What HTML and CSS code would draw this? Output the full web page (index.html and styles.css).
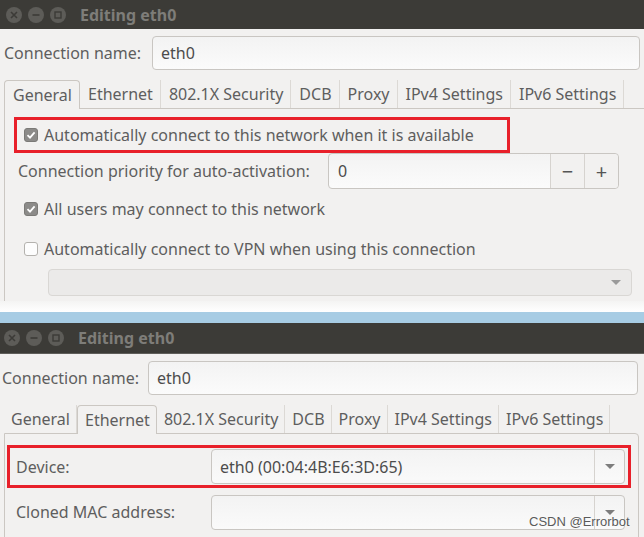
FILE: index.html
```html
<!DOCTYPE html>
<html lang="en">
<head>
  <meta charset="UTF-8">
  <title>Editing eth0</title>
  <link rel="stylesheet" href="styles.css">
</head>
<body>
  <div class="shot shot-top">
    <div class="titlebar">
      <div class="wbtns">
        <span class="wbtn"><svg width="8" height="8" viewBox="0 0 8 8"><path d="M1 1L7 7M7 1L1 7" stroke="#3c3b37" stroke-width="1.6"/></svg></span>
        <span class="wbtn"><svg width="8" height="8" viewBox="0 0 8 8"><path d="M0.5 4H7.5" stroke="#3c3b37" stroke-width="1.6"/></svg></span>
        <span class="wbtn"><svg width="8" height="8" viewBox="0 0 8 8"><rect x="1" y="1" width="6" height="6" fill="none" stroke="#3c3b37" stroke-width="1.4"/></svg></span>
      </div>
      <span class="title">Editing eth0</span>
    </div>
    <div class="body">
      <div class="name-row">
        <label>Connection name:</label>
        <div class="entry">eth0</div>
      </div>
      <div class="tabs">
        <span class="tab active">General</span>
        <span class="tab">Ethernet</span>
        <span class="tab">802.1X Security</span>
        <span class="tab">DCB</span>
        <span class="tab">Proxy</span>
        <span class="tab">IPv4 Settings</span>
        <span class="tab">IPv6 Settings</span>
      </div>
      <div class="panel">
        <div class="chk mark">
          <span class="check on"><svg width="10" height="10" viewBox="0 0 10 10"><path d="M1.5 5.2L4 7.6L8.6 2.4" fill="none" stroke="#fff" stroke-width="1.8"/></svg></span>
          Automatically connect to this network when it is available
        </div>
        <div class="prio">
          <span class="prio-label">Connection priority for auto-activation:</span>
          <div class="spin">
            <span class="spin-val">0</span>
            <span class="sbtn">&minus;</span>
            <span class="sbtn">+</span>
          </div>
        </div>
        <div class="chk users">
          <span class="check on"><svg width="10" height="10" viewBox="0 0 10 10"><path d="M1.5 5.2L4 7.6L8.6 2.4" fill="none" stroke="#fff" stroke-width="1.8"/></svg></span>
          All users may connect to this network
        </div>
        <div class="chk vpn">
          <span class="check"></span>
          Automatically connect to VPN when using this connection
        </div>
        <div class="combo disabled vpn-combo">
          <span class="combo-val"></span>
          <span class="drop"><span class="arrow"></span></span>
        </div>
      </div>
    </div>
  </div>

  <div class="sep-white"></div>
  <div class="sep-blue"></div>

  <div class="shot shot-bottom">
    <div class="titlebar">
      <div class="wbtns">
        <span class="wbtn"><svg width="8" height="8" viewBox="0 0 8 8"><path d="M1 1L7 7M7 1L1 7" stroke="#3c3b37" stroke-width="1.6"/></svg></span>
        <span class="wbtn"><svg width="8" height="8" viewBox="0 0 8 8"><path d="M0.5 4H7.5" stroke="#3c3b37" stroke-width="1.6"/></svg></span>
        <span class="wbtn"><svg width="8" height="8" viewBox="0 0 8 8"><rect x="1" y="1" width="6" height="6" fill="none" stroke="#3c3b37" stroke-width="1.4"/></svg></span>
      </div>
      <span class="title">Editing eth0</span>
    </div>
    <div class="body">
      <div class="name-row">
        <label>Connection name:</label>
        <div class="entry">eth0</div>
      </div>
      <div class="tabs">
        <span class="tab">General</span>
        <span class="tab active">Ethernet</span>
        <span class="tab">802.1X Security</span>
        <span class="tab">DCB</span>
        <span class="tab">Proxy</span>
        <span class="tab">IPv4 Settings</span>
        <span class="tab">IPv6 Settings</span>
      </div>
      <div class="panel">
        <div class="drow mark">
          <span class="drow-label">Device:</span>
          <div class="combo">
            <span class="combo-val">eth0 (00:04:4B:E6:3D:65)</span>
            <span class="drop"><span class="arrow"></span></span>
          </div>
        </div>
        <div class="drow cloned">
          <span class="drow-label">Cloned MAC address:</span>
          <div class="combo">
            <span class="combo-val"></span>
            <span class="drop"><span class="arrow"></span></span>
          </div>
        </div>
      </div>
    </div>
    <div class="watermark">CSDN @Errorbot</div>
  </div>
</body>
</html>
```

FILE: styles.css
```css
* {
  margin: 0;
  padding: 0;
  box-sizing: border-box;
}
body {
  width: 644px;
  height: 537px;
  overflow: hidden;
  background: #f2f1f0;
  font-family: 'Noto Sans', sans-serif;
  font-size: 16px;
  color: #5e5e5e;
}
.shot {
  overflow: hidden;
}
.shot-top {
  height: 301px;
}
.shot-bottom {
  height: 214px;
  position: relative;
}

/* title bar */
.titlebar {
  background: #3c3b37;
  display: flex;
  align-items: center;
}
.shot-top .titlebar {
  height: 29px;
  padding-left: 6px;
}
.shot-bottom .titlebar {
  height: 31px;
  padding-left: 4px;
  border-bottom: 1px solid #5f5e5a;
}
.wbtns {
  display: flex;
  gap: 6px;
}
.wbtn {
  width: 16px;
  height: 16px;
  border-radius: 50%;
  background: #5d5c58;
  display: flex;
  align-items: center;
  justify-content: center;
}
.title {
  margin-left: 14px;
  font-weight: bold;
  font-size: 16px;
  color: #7e7d79;
}

/* separator between the two screenshots */
.sep-white {
  height: 11px;
  background: linear-gradient(to bottom, #f4f4f3, #ffffff);
}
.sep-blue {
  height: 11px;
  background: #a7cce4;
}

/* window body */
.shot-top .body {
  padding: 0 4px;
}
.shot-bottom .body {
  padding: 0 6px 0 2px;
}
.name-row {
  display: flex;
  align-items: center;
  height: 34px;
  margin-top: 7px;
}
.shot-top .name-row label {
  flex: 0 0 148px;
}
.shot-bottom .name-row label {
  flex: 0 0 146px;
}
.entry {
  flex: 1;
  height: 34px;
  border: 1px solid #c9c6c2;
  border-radius: 4px;
  background: linear-gradient(#f3f3f3, #fbfbfb);
  padding-left: 8px;
  display: flex;
  align-items: center;
  color: #4c4c4c;
}

/* tabs */
.tabs {
  display: flex;
  height: 28px;
  margin-top: 10px;
}
.shot-bottom .tabs {
  margin-left: 2px;
}
.tab {
  padding: 0 7px 0 8px;
  display: flex;
  align-items: center;
  border-right: 1px solid #dcd9d5;
  white-space: nowrap;
}
.shot-bottom .tab {
  padding: 0 6px 0 7px;
}
.tab.active {
  border: 1px solid #cbc7c2;
  border-bottom: none;
  border-radius: 4px 4px 0 0;
  background: #f2f1f0;
  height: 29px;
  margin-bottom: -1px;
  position: relative;
  z-index: 1;
}
.panel {
  border: 1px solid #cbc7c2;
  border-radius: 0 4px 4px 4px;
  height: 240px;
}
.shot-top .panel {
  margin-right: -12px;
}
.shot-bottom .panel {
  margin-left: 2px;
  margin-right: -1px;
}

/* checkboxes */
.chk {
  display: flex;
  align-items: center;
}
.check {
  width: 14px;
  height: 14px;
  border: 1px solid #b4b2ae;
  border-radius: 3px;
  background: #fdfdfd;
  margin-right: 6px;
  display: flex;
  align-items: center;
  justify-content: center;
}
.check.on {
  background: #8c8b89;
  border-color: #7b7a77;
}
.mark {
  border: 3px solid #e8202a;
}
.chk.mark {
  margin: 8px 0 0 9px;
  width: 496px;
  height: 36px;
  padding-left: 7px;
}
.chk.users {
  height: 24px;
  margin-top: 8px;
  padding-left: 19px;
}
.chk.vpn {
  height: 24px;
  margin-top: 16px;
  padding-left: 19px;
}

/* priority spin */
.prio {
  display: flex;
  align-items: center;
  height: 36px;
  padding-left: 13px;
}
.prio-label {
  flex: 0 0 310px;
}
.spin {
  width: 291px;
  height: 36px;
  display: flex;
  border: 1px solid #c9c6c2;
  border-radius: 4px;
  background: linear-gradient(#f3f3f3, #fbfbfb);
}
.spin-val {
  flex: 1;
  padding-left: 9px;
  display: flex;
  align-items: center;
  color: #4c4c4c;
}
.sbtn {
  width: 34px;
  border-left: 1px solid #d6d3cf;
  display: flex;
  align-items: center;
  justify-content: center;
  font-size: 20px;
  color: #555;
  background: #f2f1f0;
}
.sbtn:last-child {
  border-radius: 0 4px 4px 0;
}

/* combo boxes */
.combo {
  display: flex;
  border: 1px solid #c9c6c2;
  border-radius: 4px;
  background: linear-gradient(#f3f3f3, #fafafa);
}
.combo-val {
  flex: 1;
  padding-left: 8px;
  display: flex;
  align-items: center;
  color: #4c4c4c;
}
.drop {
  width: 30px;
  border-left: 1px solid #d6d3cf;
  display: flex;
  align-items: center;
  justify-content: center;
}
.arrow {
  width: 0;
  height: 0;
  border-left: 5px solid transparent;
  border-right: 5px solid transparent;
  border-top: 5px solid #7d7d7d;
}
.combo.disabled {
  background: #ebeae9;
  border-color: #d9d7d4;
}
.combo.disabled .drop {
  border-left: none;
}
.combo.disabled .arrow {
  border-top-color: #9a9a9a;
}
.vpn-combo {
  margin: 8px 0 0 43px;
  width: 584px;
  height: 27px;
}

/* ethernet rows */
.drow {
  display: flex;
  align-items: center;
  padding: 0 3px 0 6px;
  margin: 0 7px 0 2px;
  border: 3px solid transparent;
}
.drow.mark {
  border-color: #e8202a;
  height: 43px;
  margin-top: 11px;
}
.drow.cloned {
  height: 42px;
  margin-top: 3px;
}
.drow-label {
  flex: 0 0 195px;
}
.drow .combo {
  flex: 1;
  height: 35px;
}

.watermark {
  position: absolute;
  left: 529px;
  top: 191px;
  font-family: 'Liberation Sans', sans-serif;
  font-size: 13px;
  color: #5a5a5a;
  text-shadow: 0 0 2px #fff;
}
```
